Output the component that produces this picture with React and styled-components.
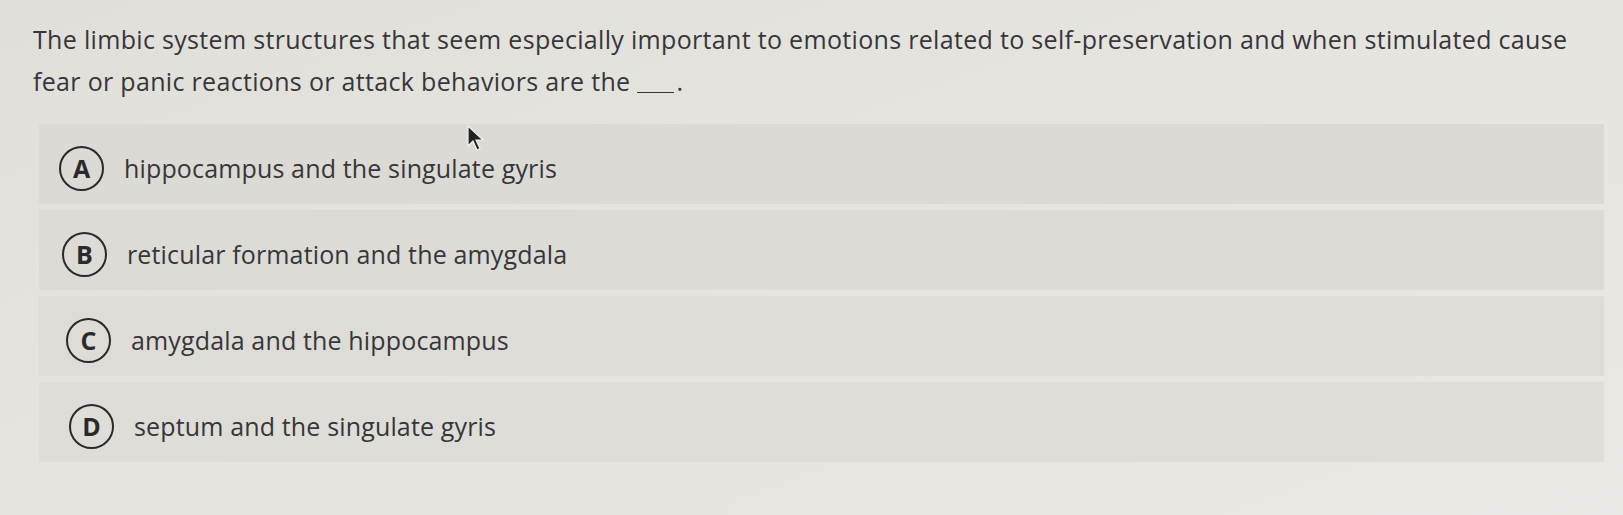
import React from "react";
import styled, { createGlobalStyle } from "styled-components";

const Global = createGlobalStyle`
  html, body { margin: 0; padding: 0; }
  body {
    width: 1623px;
    height: 515px;
    overflow: hidden;
    background: linear-gradient(160deg, #e1dfda 0%, #e6e4df 45%, #eae8e4 100%);
    font-family: "Open Sans", "Noto Sans", sans-serif;
    color: #37363a;
  }
`;

const Page = styled.main`
  position: relative;
  padding: 18px 19px 0 33px;
  box-sizing: border-box;
  height: 515px;
`;

const Question = styled.p`
  margin: 0;
  font-size: 25px;
  line-height: 42px;
  letter-spacing: 0.32px;
`;

const Blank = styled.span`
  display: inline-block;
  width: 37px;
  height: 0;
  border-bottom: 1.5px solid #37363a;
  margin: 0 2px -2px 7px;
`;

const Options = styled.ul`
  list-style: none;
  margin: 22px 0 0 6px;
  padding: 0;
  display: flex;
  flex-direction: column;
  gap: 6px;
`;

const Option = styled.li`
  height: 80px;
  display: flex;
  align-items: center;
  gap: 20px;
  padding: 8px 0 0 20px;
  box-sizing: border-box;
  background: ${(p) => p.$bg};
  font-size: 25px;
  letter-spacing: 0.15px;
  color: #37363a;
`;

const Circle = styled.span`
  width: 41px;
  height: 41px;
  border: 2.5px solid #2a292c;
  border-radius: 50%;
  display: inline-flex;
  align-items: center;
  justify-content: center;
  font-size: 25px;
  font-weight: 700;
  letter-spacing: 0;
  color: #2a292c;
  flex: none;
  box-sizing: content-box;
  margin-left: ${(p) => p.$shift}px;
`;

const Cursor = styled.svg`
  position: absolute;
  left: 466px;
  top: 125px;
  width: 20px;
  height: 28px;
`;

const options = [
  { l: "A", t: "hippocampus and the singulate gyris", bg: "#dcdad5", s: 0 },
  { l: "B", t: "reticular formation and the amygdala", bg: "#dddbd6", s: 3 },
  { l: "C", t: "amygdala and the hippocampus", bg: "#dedcd7", s: 7 },
  { l: "D", t: "septum and the singulate gyris", bg: "#dfddd8", s: 10 },
];

export default function App() {
  return (
    <Page>
      <Global />
      <Question>
        The limbic system structures that seem especially important to emotions related to self-preservation and when stimulated cause fear or panic reactions or attack behaviors are the
        <Blank />.
      </Question>
      <Options>
        {options.map((o) => (
          <Option key={o.l} $bg={o.bg}>
            <Circle $shift={o.s}>{o.l}</Circle>
            <span>{o.t}</span>
          </Option>
        ))}
      </Options>
      <Cursor viewBox="0 0 20 28">
        <path d="M2 1 L2 21 L7 16 L11 25 L14 23.5 L10 15 L17 15 Z" fill="#222" stroke="#f4f4f4" strokeWidth="1.2" />
      </Cursor>
    </Page>
  );
}
